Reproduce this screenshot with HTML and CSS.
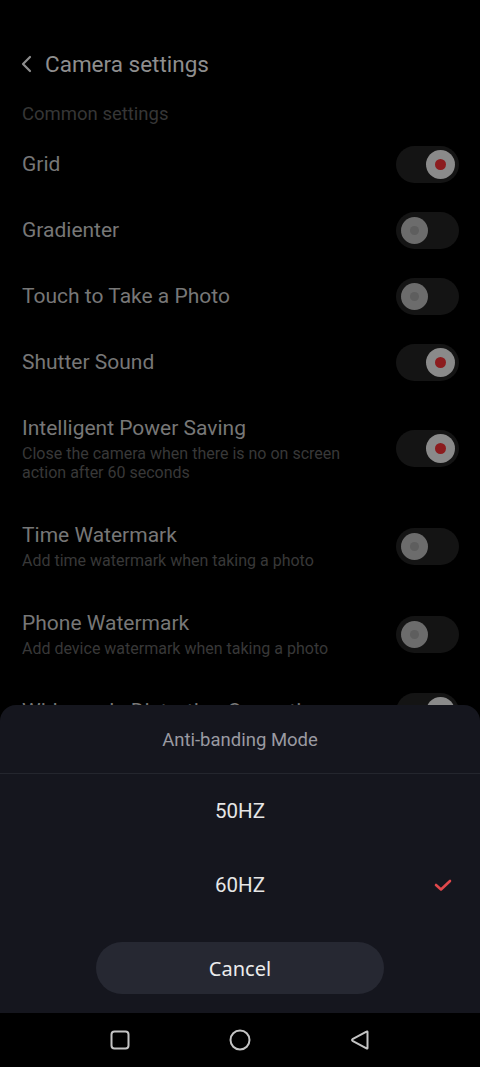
FILE: index.html
```html
<!DOCTYPE html>
<html lang="en">
<head>
    <meta charset="UTF-8">
    <meta name="viewport" content="width=device-width, initial-scale=1.0">
    <title>Camera settings</title>
    <link rel="stylesheet" href="styles.css">
</head>
<body>
    <div class="screen">
        <div class="header">
            <svg class="back" width="14" height="20" viewBox="0 0 14 20">
                <path d="M10 3 L3 10 L10 17" fill="none" stroke="#8e8e8e" stroke-width="2.2" stroke-linecap="round" stroke-linejoin="round"/>
            </svg>
            <span class="header-title">Camera settings</span>
        </div>

        <div class="section-label">Common settings</div>

        <div class="row">
            <div class="text"><div class="title">Grid</div></div>
            <div class="toggle on"><span class="knob"></span></div>
        </div>
        <div class="row">
            <div class="text"><div class="title">Gradienter</div></div>
            <div class="toggle"><span class="knob"></span></div>
        </div>
        <div class="row">
            <div class="text"><div class="title">Touch to Take a Photo</div></div>
            <div class="toggle"><span class="knob"></span></div>
        </div>
        <div class="row">
            <div class="text"><div class="title">Shutter Sound</div></div>
            <div class="toggle on"><span class="knob"></span></div>
        </div>
        <div class="row">
            <div class="text">
                <div class="title">Intelligent Power Saving</div>
                <div class="sub">Close the camera when there is no on screen action after 60 seconds</div>
            </div>
            <div class="toggle on"><span class="knob"></span></div>
        </div>
        <div class="row">
            <div class="text">
                <div class="title">Time Watermark</div>
                <div class="sub">Add time watermark when taking a photo</div>
            </div>
            <div class="toggle"><span class="knob"></span></div>
        </div>
        <div class="row">
            <div class="text">
                <div class="title">Phone Watermark</div>
                <div class="sub">Add device watermark when taking a photo</div>
            </div>
            <div class="toggle"><span class="knob"></span></div>
        </div>
        <div class="row">
            <div class="text"><div class="title">Wide-angle Distortion Correction</div></div>
            <div class="toggle on"><span class="knob"></span></div>
        </div>

        <div class="sheet">
            <div class="sheet-title">Anti-banding Mode</div>
            <div class="option">50HZ</div>
            <div class="option selected">
                60HZ
                <svg class="check" width="18" height="14" viewBox="0 0 18 14">
                    <path d="M2 7 L7 11.5 L16 3" fill="none" stroke="#e0484c" stroke-width="2.6" stroke-linecap="round" stroke-linejoin="round"/>
                </svg>
            </div>
            <div class="cancel-wrap">
                <button class="cancel">Cancel</button>
            </div>
        </div>

        <div class="navbar">
            <svg width="20" height="20" viewBox="0 0 20 20">
                <rect x="1.5" y="1.5" width="17" height="17" rx="3" fill="none" stroke="#c4c4c4" stroke-width="2"/>
            </svg>
            <svg width="22" height="22" viewBox="0 0 22 22">
                <circle cx="11" cy="11" r="9.5" fill="none" stroke="#c4c4c4" stroke-width="2"/>
            </svg>
            <svg width="20" height="20" viewBox="0 0 20 20">
                <path d="M17.5 2 L17.5 18 Q17.5 19 16.5 18.4 L2.5 10.8 Q1.6 10 2.5 9.2 L16.5 1.6 Q17.5 1 17.5 2 Z" fill="none" stroke="#c4c4c4" stroke-width="2" stroke-linejoin="round"/>
            </svg>
        </div>
    </div>
</body>
</html>
```

FILE: styles.css
```css
body {
    margin: 0;
    background-color: #000000;
    font-family: Roboto, 'Noto Sans', sans-serif;
}

.screen {
    position: relative;
    width: 480px;
    height: 1067px;
    overflow: hidden;
    background-color: #000000;
}

.header {
    display: flex;
    align-items: center;
    gap: 11px;
    height: 48px;
    padding: 40px 22px 0 20px;
}

.header-title {
    font-size: 22.5px;
    color: #8e8e8e;
}

.section-label {
    padding: 13px 22px 4px;
    font-size: 18.5px;
    line-height: 26px;
    color: #363636;
}

.row {
    display: flex;
    align-items: center;
    justify-content: space-between;
    min-height: 66px;
    padding: 0 21px 0 22px;
}

.text {
    flex: 1;
    padding: 20px 40px 20px 0;
}

.title {
    font-size: 21px;
    line-height: 26px;
    color: #777777;
    white-space: nowrap;
}

.sub {
    margin-top: 3px;
    font-size: 16px;
    line-height: 19px;
    color: #383838;
}

.toggle {
    position: relative;
    flex: none;
    width: 63px;
    height: 37px;
    border-radius: 19px;
    background-color: #141414;
}

.knob {
    position: absolute;
    top: 5px;
    left: 5px;
    width: 27px;
    height: 27px;
    border-radius: 50%;
    background-color: #6c6c6c;
}

.knob::after {
    content: "";
    position: absolute;
    top: 9px;
    left: 9px;
    width: 9px;
    height: 9px;
    border-radius: 50%;
    background-color: #5e5e5e;
}

.toggle.on .knob {
    top: 4px;
    left: 30px;
    width: 29px;
    height: 29px;
    background-color: #8a8a8a;
}

.toggle.on .knob::after {
    top: 9px;
    left: 9px;
    width: 11px;
    height: 11px;
    background-color: #8c1c1e;
}

.sheet {
    position: absolute;
    left: 0;
    right: 0;
    bottom: 54px;
    height: 308px;
    border-radius: 16px 16px 0 0;
    background-color: #15161e;
}

.sheet-title {
    height: 68px;
    line-height: 70px;
    text-align: center;
    font-size: 18.5px;
    color: #9a9aa2;
    border-bottom: 1px solid #24262e;
}

.option {
    position: relative;
    height: 74px;
    line-height: 74px;
    text-align: center;
    font-size: 20.5px;
    color: #e6e6e6;
}

.check {
    position: absolute;
    right: 28px;
    top: 30px;
}

.cancel-wrap {
    display: flex;
    justify-content: center;
    padding-top: 20px;
}

.cancel {
    width: 288px;
    height: 52px;
    border: none;
    border-radius: 26px;
    background-color: #262832;
    color: #ececec;
    font-family: 'Noto Sans', Roboto, sans-serif;
    font-size: 20px;
}

.navbar {
    position: absolute;
    left: 0;
    right: 0;
    bottom: 0;
    height: 54px;
    display: flex;
    align-items: center;
    justify-content: space-between;
    padding: 0 110px;
    background-color: #000000;
}
```
